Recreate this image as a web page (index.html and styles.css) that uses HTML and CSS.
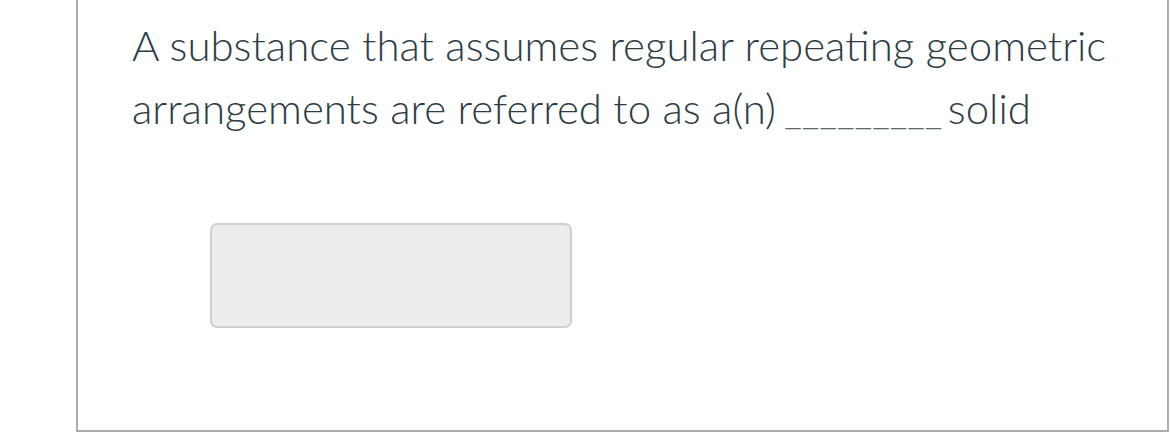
FILE: index.html
```html
<!DOCTYPE html>
<html>
<head>
<meta charset="utf-8">
<link rel="stylesheet" href="styles.css">
</head>
<body>
<div class="question">
  <p class="prompt">A substance that assumes regular repeating geometric arrangements are referred to as a(n) <span class="blank">_________</span> solid</p>
  <div class="answer"><input class="answer-input" type="text"></div>
</div>
</body>
</html>
```
FILE: styles.css
```css
html, body {
  margin: 0;
  padding: 0;
  background: #fff;
}
.question {
  box-sizing: border-box;
  margin-left: 76px;
  width: 1093px;
  height: 432px;
  border: 2px solid #ababab;
  border-top: none;
  padding: 14px 40px 0 54px;
}
.prompt {
  margin: 0;
  font-family: Lato, "Liberation Sans", sans-serif;
  font-weight: 300;
  font-size: 42px;
  line-height: 63px;
  color: #2d3b45;
}
.blank {
  color: #5b6770;
  font-size: 39px;
  margin-left: -3px;
  margin-right: -6px;
}
.answer {
  padding: 82px 0 0 78px;
}
.answer-input {
  display: block;
  box-sizing: border-box;
  width: 362px;
  height: 105px;
  margin: 0;
  border: 2px solid #cfcfcf;
  border-radius: 7px;
  background: #ececec;
  outline: none;
}
```
